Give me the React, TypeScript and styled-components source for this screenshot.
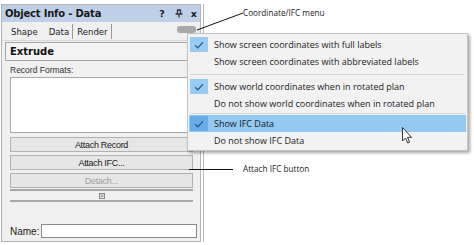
import React from "react";
import styled, { createGlobalStyle } from "styled-components";

const Global = createGlobalStyle`
  html, body { margin: 0; padding: 0; background: #ffffff; }
  body { width: 474px; height: 245px; overflow: hidden; font-family: "Liberation Sans", Arial, sans-serif; }
`;

const Page = styled.div`
  position: relative;
  width: 474px;
  height: 245px;
  background: #fff;
`;

const Panel = styled.div`
  margin: 4px 0 0 1px;
  width: 200px;
  height: 238px;
  border: 1px solid #b4b4b4;
  box-shadow: 2px 0 0 #fff, 3px 0 0 #b8b8b8;
  background: #f0f0f0;
  display: flex;
  flex-direction: column;
  box-sizing: border-box;
`;

const TitleBar = styled.div`
  height: 17px;
  background: #bdd0e8;
  display: flex;
  align-items: center;
  padding: 0 3px 0 3px;
  font-family: "DejaVu Sans", Verdana, sans-serif;
  font-weight: bold;
  font-size: 10px;
  color: #1a1a1a;
  letter-spacing: -0.2px;
`;

const TitleText = styled.span`
  flex: 1;
`;

const TitleIcon = styled.span<{ $gap: number }>`
  display: flex;
  align-items: center;
  margin-left: ${(p) => p.$gap}px;
  font-size: 9.5px;
  letter-spacing: 0;
`;

const Tabs = styled.div`
  height: 18px;
  display: flex;
  align-items: center;
  padding: 0 4px 0 9px;
  border-bottom: 1px solid #d8d8d8;
  font-family: "DejaVu Sans Condensed", "DejaVu Sans", sans-serif;
  font-size: 9.5px;
  color: #222;
`;

const Tab = styled.span<{ $sep?: boolean; $gap: number }>`
  margin-right: ${(p) => p.$gap}px;
  padding-right: ${(p) => (p.$sep ? 3 : 0)}px;
  border-right: ${(p) => (p.$sep ? "1px solid #9a9a9a" : "none")};
  line-height: 15px;
`;

const TabSpacer = styled.div`
  flex: 1;
`;

const MenuToggle = styled.div`
  width: 19px;
  height: 7px;
  border-radius: 3px;
  background: #a9a9a9;
  margin-top: -3px;
`;

const Section = styled.div`
  margin: 1px 3px 0 3px;
  height: 19px;
  border: 1px solid #a6a6a6;
  background: #f4f4f4;
  display: flex;
  align-items: center;
  padding-left: 4px;
  font-family: "DejaVu Sans", Verdana, sans-serif;
  font-weight: bold;
  font-size: 10px;
  color: #111;
  box-sizing: border-box;
`;

const Body = styled.div`
  padding: 0 3px 0 8px;
  display: flex;
  flex-direction: column;
  flex: 1;
`;

const Label = styled.div`
  font-size: 8.5px;
  color: #333;
  margin-top: 4px;
  height: 11px;
  line-height: 11px;
`;

const ListBox = styled.div`
  margin-top: 1px;
  height: 56px;
  background: #fff;
  border: 1px solid #a8a8a8;
  box-sizing: border-box;
`;

const Buttons = styled.div`
  margin-top: 4px;
  margin-right: 4px;
  display: flex;
  flex-direction: column;
  gap: 3px;
`;

const Button = styled.div<{ $disabled?: boolean }>`
  height: 15px;
  border: 1px solid #b2b2b2;
  background: #e6e6e6;
  box-sizing: border-box;
  display: flex;
  align-items: center;
  justify-content: center;
  font-size: 9px;
  letter-spacing: -0.3px;
  color: ${(p) => (p.$disabled ? "#a0a0a0" : "#222")};
`;

const Splitter = styled.div`
  margin-top: 1px;
  margin-right: 4px;
  height: 9px;
  border-top: 2px solid #a8a8a8;
  border-bottom: 2px solid #a8a8a8;
  display: flex;
  justify-content: center;
  align-items: center;
`;

const NameRow = styled.div`
  margin-top: auto;
  margin-bottom: 3px;
  display: flex;
  align-items: center;
  gap: 2px;
  font-size: 10px;
  color: #222;
`;

const NameInput = styled.div`
  flex: 1;
  height: 12px;
  background: #fff;
  border: 1px solid #8a8a8a;
`;

const Menu = styled.div`
  position: absolute;
  left: 187px;
  top: 29px;
  width: 281px;
  padding: 2px 0 1px;
  background: #f2f2f2;
  border: 1px solid #c4c4c4;
  box-shadow: 2px 2px 3px rgba(0, 0, 0, 0.35);
  box-sizing: border-box;
  font-family: "Open Sans", "Noto Sans", sans-serif;
  font-size: 9px;
  color: #1a1a1a;
  white-space: nowrap;
`;

const Item = styled.div<{ $hl?: boolean }>`
  height: 17px;
  display: flex;
  align-items: center;
  margin: 0 1px;
  background: ${(p) => (p.$hl ? "#93c8f2" : "transparent")};
`;

const Check = styled.div<{ $on?: boolean; $hl?: boolean }>`
  width: 18px;
  height: 15px;
  margin: 0 6px 0 1px;
  display: flex;
  align-items: center;
  justify-content: center;
  background: ${(p) => (p.$on ? (p.$hl ? "#67aee8" : "#9ccbf2") : "transparent")};
`;

const Sep = styled.div<{ $h: number }>`
  height: ${(p) => p.$h}px;
  display: flex;
  align-items: center;
  margin: 0 2px;
  &::after {
    content: "";
    flex: 1;
    border-top: 1px solid #d6d6d6;
  }
`;

const Callout = styled.div<{ $x: number; $y: number }>`
  position: absolute;
  left: ${(p) => p.$x}px;
  top: ${(p) => p.$y}px;
  font-family: "Open Sans", "Noto Sans", sans-serif;
  font-size: 8.2px;
  color: #222;
  white-space: nowrap;
`;

const Overlay = styled.svg`
  position: absolute;
  left: 0;
  top: 0;
  pointer-events: none;
`;

const CheckMark = () => (
  <svg width="10" height="8" viewBox="0 0 10 8">
    <path d="M1 4.2 L3.8 6.8 L9 1.2" fill="none" stroke="#2b5f9a" strokeWidth="1.3" />
  </svg>
);

const Pin = () => (
  <svg width="8" height="9" viewBox="0 0 8 9">
    <path d="M2 1 H6 M2.5 1 V5 M5.5 1 V5 M0.5 5 H7.5 M4 5 V8.5" stroke="#333" strokeWidth="1.3" fill="none" />
  </svg>
);

const Grip = () => (
  <svg width="6" height="6" viewBox="0 0 6 6">
    <rect x="0.5" y="0.5" width="5" height="5" fill="#ececec" stroke="#8a8a8a" strokeWidth="1" />
    <path d="M1.5 2 H4.5 M1.5 3.5 H4.5" stroke="#8a8a8a" strokeWidth="0.8" />
  </svg>
);

const items = [
  { t: "Show screen coordinates with full labels", on: true },
  { t: "Show screen coordinates with abbreviated labels" },
  { sep: 8 },
  { t: "Show world coordinates when in rotated plan", on: true },
  { t: "Do not show world coordinates when in rotated plan" },
  { sep: 3 },
  { t: "Show IFC Data", on: true, hl: true },
  { t: "Do not show IFC Data" },
];

export default function App() {
  return (
    <Page>
      <Global />
      <Panel>
        <TitleBar>
          <TitleText>Object Info - Data</TitleText>
          <TitleIcon $gap={0}>?</TitleIcon>
          <TitleIcon $gap={10}><Pin /></TitleIcon>
          <TitleIcon $gap={8}>x</TitleIcon>
        </TitleBar>
        <Tabs>
          <Tab $gap={11}>Shape</Tab>
          <Tab $gap={4} $sep>Data</Tab>
          <Tab $gap={0} $sep>Render</Tab>
          <TabSpacer />
          <MenuToggle />
        </Tabs>
        <Section>Extrude</Section>
        <Body>
          <Label>Record Formats:</Label>
          <ListBox />
          <Buttons>
            <Button>Attach Record</Button>
            <Button>Attach IFC...</Button>
            <Button $disabled>Detach...</Button>
          </Buttons>
          <Splitter>
            <Grip />
          </Splitter>
          <NameRow>
            <span>Name:</span>
            <NameInput />
          </NameRow>
        </Body>
      </Panel>

      <Menu>
        {items.map((it, i) =>
          it.sep ? (
            <Sep key={i} $h={it.sep} />
          ) : (
            <Item key={i} $hl={it.hl}>
              <Check $on={it.on} $hl={it.hl}>{it.on && <CheckMark />}</Check>
              <span>{it.t}</span>
            </Item>
          )
        )}
      </Menu>

      <Callout $x={243} $y={3}>Coordinate/IFC menu</Callout>
      <Callout $x={243} $y={159}>Attach IFC button</Callout>

      <Overlay width="474" height="245" viewBox="0 0 474 245">
        <path d="M197 26 L243 9" stroke="#111" strokeWidth="1" />
        <path d="M189 165.5 H233" stroke="#111" strokeWidth="1" />
        <path
          d="M402.5 123.5 V137 L405.5 134 L407.7 139 L409.6 138.2 L407.5 133.3 L411.5 133.3 Z"
          fill="#fff"
          stroke="#333"
          strokeWidth="1"
          strokeLinejoin="round"
        />
      </Overlay>
    </Page>
  );
}
